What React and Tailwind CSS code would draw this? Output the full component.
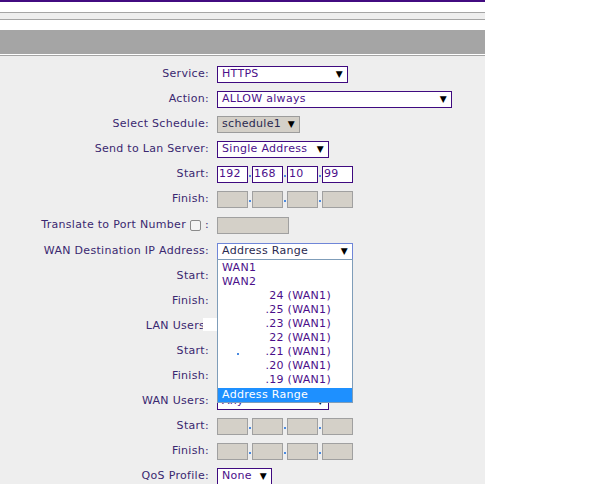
import React from "react";

const LBL = "text-[#3a2870]";
const VAL = "text-[#4b0f8a]";

function Arrow() {
  return <span className="ml-auto text-[9px] leading-none text-black pr-[4px]">▼</span>;
}

function Select({ w, text, variant = "normal" }) {
  const cls =
    variant === "disabled"
      ? "bg-[#d4d0c8] border-[#9c9c9c]"
      : variant === "focus"
      ? "bg-white border-[#6f86d8]"
      : "bg-white border-[#3f0a80]";
  return (
    <div
      className={`h-[17px] border flex items-center pl-[4px] ${cls} ${VAL}`}
      style={{ width: w }}
    >
      <span className={variant === "disabled" || variant === "focus" ? "text-[#2a2a50]" : ""}>{text}</span>
      <Arrow />
    </div>
  );
}

function Box({ w = 31, value = "", disabled }) {
  return (
    <div
      className={`h-[17px] border flex items-center pl-[1px] ${
        disabled ? "bg-[#d4d0c8] border-[#a0a0a0]" : "bg-white border-[#3f0a80]"
      } ${VAL}`}
      style={{ width: w }}
    >
      {value}
    </div>
  );
}

function IP({ values, disabled }) {
  const v = values || ["", "", "", ""];
  return (
    <div className="flex items-center">
      {v.map((x, i) => (
        <React.Fragment key={i}>
          {i > 0 && (
            <div className="w-[4px] h-[17px] flex items-center justify-center">
              <div className="w-[2px] h-[2px] bg-[#4a8ae0] mt-[3px]" />
            </div>
          )}
          <Box value={x} disabled={disabled} />
        </React.Fragment>
      ))}
    </div>
  );
}

function Row({ label, children, h = 25 }) {
  return (
    <div className="flex items-center" style={{ height: h }}>
      <div className={`w-[209px] text-right whitespace-nowrap ${LBL}`}>{label}</div>
      <div className="ml-[8px]">{children}</div>
    </div>
  );
}

export default function App() {
  const items = [
    ["24 (WAN1)"],
    [".25 (WAN1)"],
    [".23 (WAN1)"],
    ["22 (WAN1)"],
    [".21 (WAN1)"],
    [".20 (WAN1)"],
    [".19 (WAN1)"],
  ];
  return (
    <div
      className="relative w-[605px] h-[484px] bg-white overflow-hidden text-[11px] tracking-[0.3px]"
      style={{ fontFamily: '"DejaVu Sans", Verdana, sans-serif' }}
    >
      <div className="w-[485px]">
        <div className="h-[2px] bg-[#420b80]" />
        <div className="h-[10px]" />
        <div className="h-[8px] bg-[#eeeeee] border-y border-[#a5a5a5]" />
        <div className="h-[10px]" />
        <div className="h-[24px] bg-[#a5a5a5]" />
        <div className="h-[1px]" />
        <div className="h-[1px] bg-[#a5a5a5]" />
        <div className="bg-[#eeeeee] pt-[6px] h-[440px]">
          <Row label="Service:"><Select w={131} text="HTTPS" /></Row>
          <Row label="Action:"><Select w={235} text="ALLOW always" /></Row>
          <Row label="Select Schedule:"><Select w={83} text="schedule1" variant="disabled" /></Row>
          <Row label="Send to Lan Server:"><Select w={112} text="Single Address" /></Row>
          <Row label="Start:"><IP values={["192", "168", "10", "99"]} /></Row>
          <Row label="Finish:"><IP disabled /></Row>
          <Row
            h={27}
            label={
              <span className="inline-flex items-center">
                Translate to Port Number
                <span className="inline-block w-[11px] h-[11px] ml-[4px] mr-[4px] rounded-[2px] border border-[#8a8a8a] bg-[#f4f4f4]" />
                :
              </span>
            }
          >
            <Box w={72} disabled />
          </Row>
          <Row label="WAN Destination IP Address:"><Select w={136} text="Address Range" variant="focus" /></Row>
          <Row label="Start:"><IP /></Row>
          <Row label="Finish:"><IP /></Row>
          <Row label="LAN Users:"><Select w={112} text="" /></Row>
          <Row label="Start:"><IP disabled /></Row>
          <Row label="Finish:"><IP disabled /></Row>
          <Row label="WAN Users:"><Select w={112} text="Any" /></Row>
          <Row label="Start:"><IP disabled /></Row>
          <Row label="Finish:"><IP disabled /></Row>
          <Row label="QoS Profile:"><Select w={55} text="None" /></Row>
        </div>
      </div>

      {/* redaction patch */}
      <div className="absolute left-[203px] top-[318px] w-[15px] h-[13px] bg-white" />

      {/* open dropdown list */}
      <div className="absolute left-[217px] top-[259px] w-[136px] h-[144px] bg-white border border-[#7f9db9] pt-[1px]">
        <div className={`h-[14px] leading-[14px] pl-[4px] ${VAL}`}>WAN1</div>
        <div className={`h-[14px] leading-[14px] pl-[4px] ${VAL}`}>WAN2</div>
        {items.map(([t], i) => (
          <div key={i} className={`h-[14px] leading-[14px] text-right pr-[21px] ${VAL}`}>{t}</div>
        ))}
        <div className="h-[14px] leading-[14px] pl-[4px] bg-[#1e90ff] text-white mt-[1px]">Address Range</div>
        <div className="absolute left-[19px] top-[93px] w-[2px] h-[2px] bg-[#4a8ae0]" />
      </div>
    </div>
  );
}
